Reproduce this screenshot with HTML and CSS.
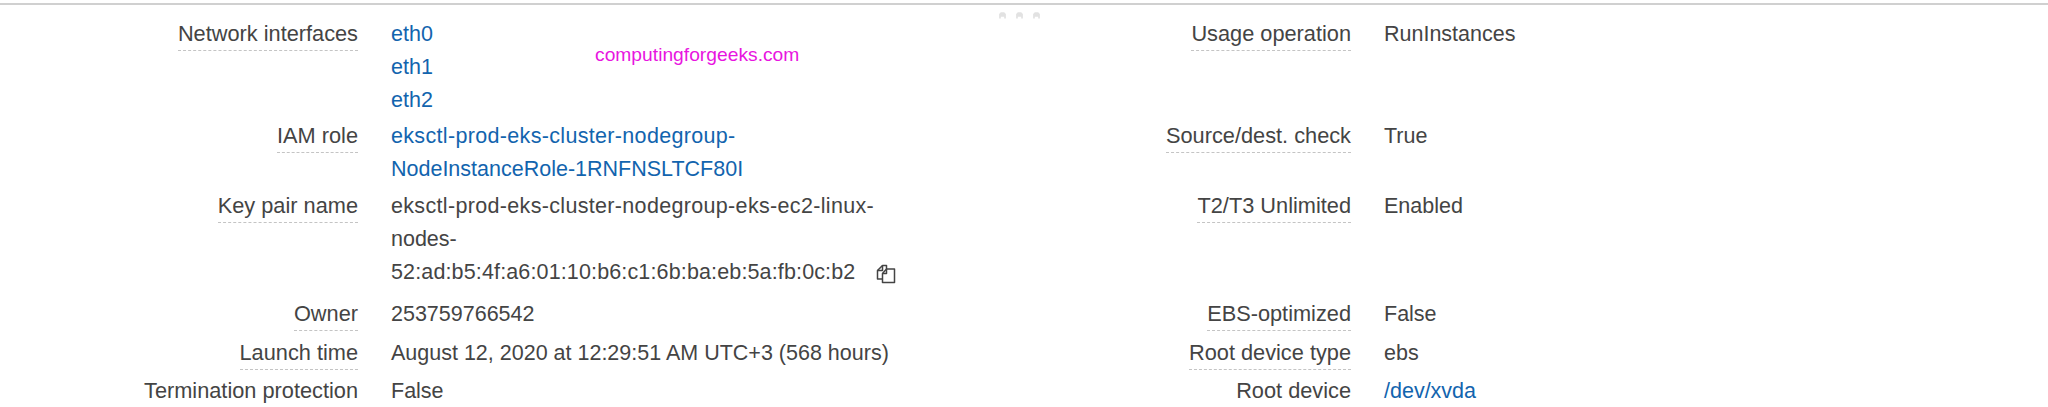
FILE: index.html
```html
<!DOCTYPE html>
<html lang="en">
<head>
<meta charset="utf-8">
<title>Instance details</title>
<link rel="stylesheet" href="styles.css">
</head>
<body>
<div class="panel">
  <div class="handle">
    <svg class="grip" viewBox="0 0 8 7"><path d="M1 6.500V2.500L2.500 1h3L7 2.500V6.500H5.500V5h-3v1.500z"/></svg>
    <svg class="grip" viewBox="0 0 8 7"><path d="M1 6.500V2.500L2.500 1h3L7 2.500V6.500H5.500V5h-3v1.500z"/></svg>
    <svg class="grip" viewBox="0 0 8 7"><path d="M1 6.500V2.500L2.500 1h3L7 2.500V6.500H5.500V5h-3v1.500z"/></svg>
  </div>
  <div class="watermark">computingforgeeks.com</div>
  <div class="details">
    <div class="key"><span class="term">Network interfaces</span></div>
    <div class="val"><a class="link" href="#">eth0</a><br><a class="link" href="#">eth1</a><br><a class="link" href="#">eth2</a></div>
    <div class="key"><span class="term">Usage operation</span></div>
    <div class="val">RunInstances</div>

    <div class="key"><span class="term">IAM role</span></div>
    <div class="val pad-1"><a class="link" href="#"><span class="wide">eksctl-prod-eks-cluster-nodegroup-</span>NodeInstanceRole-1RNFNSLTCF80I</a></div>
    <div class="key"><span class="term">Source/dest. check</span></div>
    <div class="val">True</div>

    <div class="key"><span class="term">Key pair name</span></div>
    <div class="val pad-6"><span class="wide">eksctl-prod-eks-cluster-nodegroup-eks-ec2-linux-</span>nodes-<br><span class="wider">52:ad:b5:4f:a6:01:10:b6:c1:6b:ba:eb:5a:fb:0c:b2</span><svg class="copy" viewBox="0 0 20 20"><path d="M6.500 15H1.500V6.500L6.500 1.500H10.500V5"/><path d="M6.500 1.500V6.500H1.500"/><path d="M6.500 18.500V9.500L10.500 5H18.500V18.500Z"/><path d="M10.500 5V9.500H6.500"/></svg></div>
    <div class="key"><span class="term">T2/T3 Unlimited</span></div>
    <div class="val">Enabled</div>

    <div class="key"><span class="term">Owner</span></div>
    <div class="val pad-3">253759766542</div>
    <div class="key"><span class="term">EBS-optimized</span></div>
    <div class="val">False</div>

    <div class="key"><span class="term">Launch time</span></div>
    <div class="val pad-2">August 12, 2020 at 12:29:51 AM UTC+3 (568 hours)</div>
    <div class="key"><span class="term">Root device type</span></div>
    <div class="val">ebs</div>

    <div class="key"><span class="term">Termination protection</span></div>
    <div class="val">False</div>
    <div class="key"><span class="term">Root device</span></div>
    <div class="val"><a class="link" href="#">/dev/xvda</a></div>
  </div>
</div>
</body>
</html>
```
FILE: styles.css
```css
html, body {
  margin: 0;
  padding: 0;
  background: #fff;
}

body {
  height: 407px;
  overflow: hidden;
  font-family: "Liberation Sans", Arial, sans-serif;
  font-size: 21.500px;
  line-height: 33px;
  color: #444;
}

.panel {
  position: relative;
  margin-top: 3px;
  border-top: 2px solid #d0d0d0;
}

.handle {
  position: absolute;
  top: 6px;
  left: 998px;
  display: flex;
  gap: 8px;
}

.grip {
  display: block;
  width: 9px;
  height: 8px;
  fill: #e2e2e2;
}

.watermark {
  position: absolute;
  top: 33px;
  left: 595px;
  font-size: 19.250px;
  line-height: 33px;
  color: #e815e0;
}

.details {
  display: grid;
  grid-template-columns: 358px 520px 407px 1fr;
  column-gap: 33px;
  row-gap: 2px;
  padding-top: 12px;
  align-items: start;
}

.key {
  text-align: right;
}

.term {
  display: inline-block;
  padding-top: 1px;
  font-size: 21.750px;
  line-height: 32px;
  border-bottom: 1px dashed #c4c4c4;
}

.val {
  padding-top: 1px;
}

.pad-1 {
  padding-bottom: 1px;
}

.pad-2 {
  padding-bottom: 2px;
}

.pad-3 {
  padding-bottom: 3px;
}

.pad-6 {
  padding-bottom: 6px;
}

.wide {
  letter-spacing: 0.330px;
}

.wider {
  letter-spacing: 0.140px;
}

.link {
  color: #1264ae;
  text-decoration: none;
}

.copy {
  width: 20px;
  height: 20px;
  margin-left: 21px;
  vertical-align: -5px;
  fill: none;
  stroke: #444;
  stroke-width: 1.500;
  stroke-linejoin: round;
}
```
